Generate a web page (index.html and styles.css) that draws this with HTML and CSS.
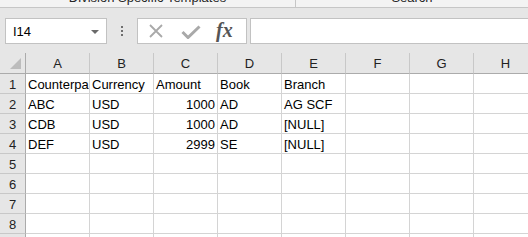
FILE: index.html
```html
<!DOCTYPE html>
<html>
<head>
<meta charset="utf-8">
<link rel="stylesheet" href="styles.css">
</head>
<body>
<div class="ribbon-tail">
  <div class="group group-left"><span class="group-label">Division Specific Templates</span></div>
  <div class="group group-right"><span class="group-label">Search</span></div>
</div>
<div class="formula-band">
  <div class="name-box"><span class="name-text">I14</span><span class="name-arrow"></span></div>
  <div class="dots"><i></i><i></i><i></i></div>
  <div class="fx-box">
    <svg class="ico-x" width="16" height="14" viewBox="0 0 16 14"><path d="M2 1 L14 13 M14 1 L2 13" stroke="#a9a9a9" stroke-width="1.8" fill="none"/></svg>
    <svg class="ico-check" width="20" height="14" viewBox="0 0 20 14"><path d="M1.5 7 L7 12.5 L18.5 1.5" stroke="#a9a9a9" stroke-width="3" fill="none"/></svg>
    <span class="fx">fx</span>
  </div>
  <div class="formula-input"></div>
</div>
<div class="sheet">
  <div class="corner"><span class="corner-tri"></span></div>
  <div class="colhead">A</div><div class="colhead">B</div><div class="colhead">C</div><div class="colhead">D</div><div class="colhead">E</div><div class="colhead">F</div><div class="colhead">G</div><div class="colhead">H</div>

  <div class="rowhead">1</div>
  <div class="cell">Counterparty</div><div class="cell">Currency</div><div class="cell">Amount</div><div class="cell">Book</div><div class="cell">Branch</div><div class="cell"></div><div class="cell"></div><div class="cell"></div>

  <div class="rowhead">2</div>
  <div class="cell">ABC</div><div class="cell">USD</div><div class="cell num">1000</div><div class="cell">AD</div><div class="cell">AG SCF</div><div class="cell"></div><div class="cell"></div><div class="cell"></div>

  <div class="rowhead">3</div>
  <div class="cell">CDB</div><div class="cell">USD</div><div class="cell num">1000</div><div class="cell">AD</div><div class="cell">[NULL]</div><div class="cell"></div><div class="cell"></div><div class="cell"></div>

  <div class="rowhead">4</div>
  <div class="cell">DEF</div><div class="cell">USD</div><div class="cell num">2999</div><div class="cell">SE</div><div class="cell">[NULL]</div><div class="cell"></div><div class="cell"></div><div class="cell"></div>

  <div class="rowhead">5</div>
  <div class="cell"></div><div class="cell"></div><div class="cell"></div><div class="cell"></div><div class="cell"></div><div class="cell"></div><div class="cell"></div><div class="cell"></div>

  <div class="rowhead">6</div>
  <div class="cell"></div><div class="cell"></div><div class="cell"></div><div class="cell"></div><div class="cell"></div><div class="cell"></div><div class="cell"></div><div class="cell"></div>

  <div class="rowhead">7</div>
  <div class="cell"></div><div class="cell"></div><div class="cell"></div><div class="cell"></div><div class="cell"></div><div class="cell"></div><div class="cell"></div><div class="cell"></div>

  <div class="rowhead">8</div>
  <div class="cell"></div><div class="cell"></div><div class="cell"></div><div class="cell"></div><div class="cell"></div><div class="cell"></div><div class="cell"></div><div class="cell"></div>

  <div class="rowhead">9</div>
  <div class="cell"></div><div class="cell"></div><div class="cell"></div><div class="cell"></div><div class="cell"></div><div class="cell"></div><div class="cell"></div><div class="cell"></div>
</div>
</body>
</html>
```

FILE: styles.css
```css
* { box-sizing: border-box; }
html, body {
  margin: 0;
  padding: 0;
}
body {
  width: 528px;
  height: 237px;
  overflow: hidden;
  background: #ffffff;
  font-family: "Liberation Sans", Arial, sans-serif;
  font-size: 13px;
  color: #000;
}

/* ribbon remnant */
.ribbon-tail {
  display: flex;
  height: 8px;
  background: #f3f3f3;
  border-bottom: 1px solid #c6c6c6;
  overflow: hidden;
}
.group {
  height: 7px;
  overflow: hidden;
  display: flex;
  justify-content: center;
}
.group-left {
  width: 296px;
  border-right: 1px solid #c6c6c6;
}
.group-right {
  flex: 1;
}
.group-label {
  font-size: 13px;
  line-height: 14px;
  margin-top: -9px;
  color: #262626;
  white-space: nowrap;
}

/* formula bar */
.formula-band {
  display: flex;
  align-items: flex-start;
  height: 45px;
  padding-top: 10px;
  background: #e6e6e6;
}
.name-box {
  margin-left: 5px;
  width: 102px;
  height: 26px;
  background: #fff;
  border: 1px solid #c2c2c2;
  display: flex;
  align-items: center;
  justify-content: space-between;
  padding: 0 7px 0 7px;
}
.name-text {
  font-size: 13px;
  color: #000;
}
.name-arrow {
  width: 0;
  height: 0;
  border-left: 4px solid transparent;
  border-right: 4px solid transparent;
  border-top: 4px solid #6a6a6a;
  margin-top: 1px;
}
.dots {
  width: 30px;
  height: 26px;
  display: flex;
  flex-direction: column;
  align-items: center;
  justify-content: center;
  gap: 2px;
}
.dots i {
  display: block;
  width: 2px;
  height: 2px;
  background: #6e6e6e;
}
.fx-box {
  width: 110px;
  height: 26px;
  background: #fff;
  border: 1px solid #c2c2c2;
  display: flex;
  align-items: center;
  padding-left: 10px;
}
.ico-x { margin-right: 17px; }
.ico-check { margin-right: 15px; margin-top: 1px; }
.fx {
  font-family: "Liberation Serif", "Times New Roman", serif;
  font-style: italic;
  font-weight: bold;
  font-size: 20px;
  color: #555555;
  margin-top: -1px;
}
.formula-input {
  flex: 1;
  margin-left: 3px;
  margin-right: -2px;
  height: 26px;
  background: #fff;
  border: 1px solid #c2c2c2;
}

/* sheet grid */
.sheet {
  display: grid;
  grid-template-columns: 26px repeat(8, 64px);
  grid-template-rows: 21px repeat(9, 20px);
}
.corner {
  background: #e6e6e6;
  border-right: 1px solid #ababab;
  border-bottom: 1px solid #ababab;
  position: relative;
}
.corner-tri {
  position: absolute;
  right: 4px;
  bottom: 4px;
  width: 0;
  height: 0;
  border-left: 11px solid transparent;
  border-bottom: 11px solid #bcbcbc;
}
.colhead {
  background: #e6e6e6;
  border-right: 1px solid #c8c8c8;
  border-bottom: 1px solid #ababab;
  text-align: center;
  line-height: 20px;
  padding-top: 1px;
  color: #222;
}
.rowhead {
  background: #e6e6e6;
  border-right: 1px solid #ababab;
  border-bottom: 1px solid #c8c8c8;
  text-align: center;
  line-height: 19px;
  padding-top: 1px;
  color: #222;
}
.cell {
  border-right: 1px solid #d4d4d4;
  border-bottom: 1px solid #d4d4d4;
  line-height: 19px;
  padding: 1px 2px 0 2px;
  white-space: nowrap;
  overflow: hidden;
}
.cell.num {
  text-align: right;
}
```
